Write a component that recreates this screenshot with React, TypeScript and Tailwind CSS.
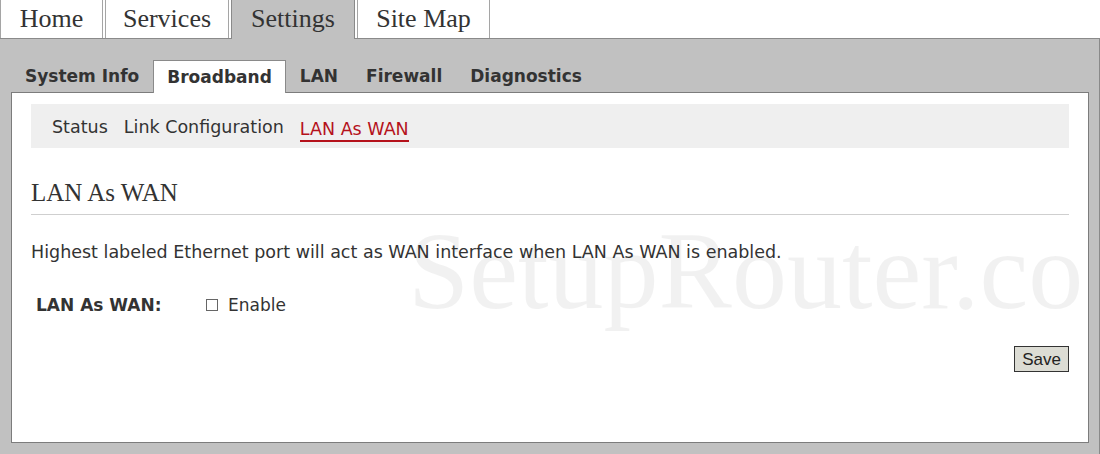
export default function App() {
  const topTabs = [
    { label: "Home", w: "w-[103px]" },
    { label: "Services", w: "w-[124px]" },
    { label: "Settings", w: "w-[124px]", active: true },
    { label: "Site Map", w: "w-[133px]" },
  ];
  const subTabs = ["System Info", "Broadband", "LAN", "Firewall", "Diagnostics"];

  return (
    <div className="w-[1100px] h-[454px] bg-white overflow-hidden">
      {/* top level tabs */}
      <div className="flex gap-[2px] h-[38px] font-['Liberation_Serif',serif] text-[26px] text-[#333]">
        {topTabs.map((t) =>
          t.active ? (
            <div
              key={t.label}
              className={`${t.w} h-[39px] relative z-10 bg-[#c1c1c1] border-x border-[#8a8a8a] flex justify-center pt-[4px] leading-[30px]`}
            >
              {t.label}
            </div>
          ) : (
            <div
              key={t.label}
              className={`${t.w} h-[38px] bg-white border-x border-[#a5a5a5] flex justify-center pt-[4px] leading-[30px]`}
            >
              {t.label}
            </div>
          )
        )}
      </div>

      <div className="h-[416px] bg-[#c1c1c1] border-t border-r border-[#8a8a8a] pl-[11px] pr-[10px]">
        {/* second level tabs */}
        <div className="h-[53px] flex items-end font-['DejaVu_Sans',sans-serif] font-bold text-[17px] text-[#333]">
          {subTabs.map((s) =>
            s === "Broadband" ? (
              <div
                key={s}
                className="h-[33px] -mb-px relative z-10 bg-white border-x border-t border-[#8a8a8a] px-[13px] pt-[2px] flex items-center"
              >
                {s}
              </div>
            ) : (
              <div key={s} className="h-[33px] px-[14px] pt-[2px] flex items-center">
                {s}
              </div>
            )
          )}
        </div>

        {/* content box */}
        <div className="relative h-[351px] bg-white border border-[#7c7c7c] pt-[11px] px-[19px] overflow-hidden">
          <div className="absolute left-[396px] top-[123px] font-['Liberation_Serif',serif] text-[110px] leading-none text-black/[0.055] whitespace-nowrap pointer-events-none">
            SetupRouter.co
          </div>

          <div className="relative h-[44px] bg-[#efefef] flex items-center gap-[16px] pl-[21px] pt-[3px] font-['DejaVu_Sans',sans-serif] text-[17.5px] text-[#333]">
            <span>Status</span>
            <span>Link Configuration</span>
            <span className="text-[#b5121b] border-b-2 border-[#b5121b] leading-[22px] mt-[4px]">
              LAN As WAN
            </span>
          </div>

          <h2 className="relative mt-[31px] pb-[7px] leading-[28px] border-b border-[#cfcfcf] font-['Liberation_Serif',serif] text-[25px] text-[#333]">
            LAN As WAN
          </h2>

          <p className="relative mt-[27px] leading-[20px] font-['DejaVu_Sans',sans-serif] text-[17.5px] text-[#333] whitespace-nowrap">
            Highest labeled Ethernet port will act as WAN interface when LAN As WAN is enabled.
          </p>

          <div className="relative mt-[33px] flex items-center leading-[20px] font-['DejaVu_Sans',sans-serif] text-[17px] text-[#333]">
            <span className="w-[175px] pl-[5px] font-bold">LAN As WAN:</span>
            <span className="w-[12px] h-[12px] border border-[#666] bg-white mr-[10px]" />
            <span>Enable</span>
          </div>

          <div className="relative mt-[31px] flex justify-end">
            <button className="w-[55px] h-[26px] bg-[#dcdcd4] border border-[#333] font-['Liberation_Sans',sans-serif] text-[17px] text-[#222] leading-none">
              Save
            </button>
          </div>
        </div>
      </div>
    </div>
  );
}
